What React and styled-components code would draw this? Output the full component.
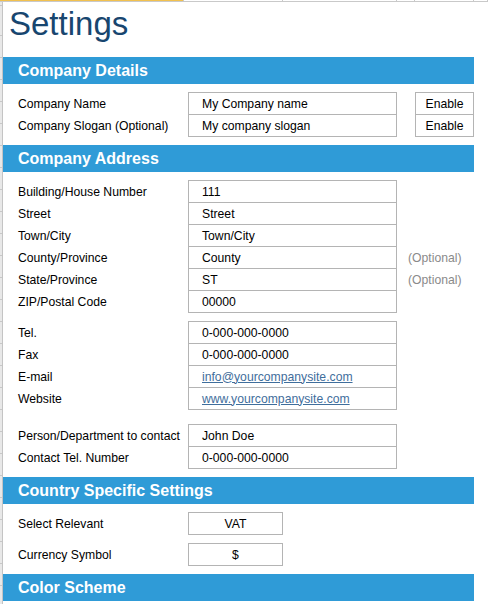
import React from 'react';
import styled, { createGlobalStyle } from 'styled-components';

const GlobalStyle = createGlobalStyle`
  html, body {
    margin: 0;
    padding: 0;
    background: #ffffff;
  }
  body {
    font-family: "Liberation Sans", Arial, sans-serif;
    color: #000000;
  }
`;

const companyDetails = [
  { label: 'Company Name', value: 'My Company name', side: 'Enable' },
  { label: 'Company Slogan (Optional)', value: 'My company slogan', side: 'Enable' }
];

const address = [
  { label: 'Building/House Number', value: '111' },
  { label: 'Street', value: 'Street' },
  { label: 'Town/City', value: 'Town/City' },
  { label: 'County/Province', value: 'County', note: '(Optional)' },
  { label: 'State/Province', value: 'ST', note: '(Optional)' },
  { label: 'ZIP/Postal Code', value: '00000' }
];

const contact = [
  { label: 'Tel.', value: '0-000-000-0000' },
  { label: 'Fax', value: '0-000-000-0000' },
  { label: 'E-mail', value: 'info@yourcompanysite.com', link: true },
  { label: 'Website', value: 'www.yourcompanysite.com', link: true }
];

const person = [
  { label: 'Person/Department to contact', value: 'John Doe' },
  { label: 'Contact Tel. Number', value: '0-000-000-0000' }
];

const country = [
  { label: 'Select Relevant', value: 'VAT' },
  { label: 'Currency Symbol', value: '$' }
];

const FieldGroup = ({ rows, top }) => (
  <Group $top={top}>
    {rows.map((row) => (
      <Row key={row.label}>
        <Label>{row.label}</Label>
        <Value>{row.link ? <LinkText>{row.value}</LinkText> : row.value}</Value>
        {row.side && <SideBox>{row.side}</SideBox>}
        {row.note && <Note>{row.note}</Note>}
      </Row>
    ))}
  </Group>
);

const App = () => {
  return (
    <>
      <GlobalStyle />
      <Page>
        <TopEdge>
          <TopCell $w={184} $selected />
          <TopCell $w={99} />
          <TopCell $w={114} />
          <TopCell $w={18} />
          <TopCell $w={59} />
          <TopCell $w={14} />
        </TopEdge>
        <Body>
          <Gutter />
          <Content>
            <Title>Settings</Title>

            <SectionHeader>Company Details</SectionHeader>
            <FieldGroup rows={companyDetails} top={8} />

            <SectionHeader $top={9}>Company Address</SectionHeader>
            <FieldGroup rows={address} top={8} />
            <FieldGroup rows={contact} top={9} />
            <FieldGroup rows={person} top={15} />

            <SectionHeader $top={9}>Country Specific Settings</SectionHeader>
            <CountryList>
              {country.map((row) => (
                <CountryRow key={row.label}>
                  <Label>{row.label}</Label>
                  <SmallBox>{row.value}</SmallBox>
                </CountryRow>
              ))}
            </CountryList>

            <SectionHeader $top={8}>Color Scheme</SectionHeader>
          </Content>
        </Body>
      </Page>
    </>
  );
};

export default App;

const Page = styled.div`
  width: 488px;
  height: 604px;
  overflow: hidden;
  display: flex;
  flex-direction: column;
`;

const TopEdge = styled.div`
  display: flex;
  height: 2px;
  flex-shrink: 0;
`;

const TopCell = styled.div`
  width: ${(p) => p.$w}px;
  box-sizing: border-box;
  border-right: 1px solid #c9c9c9;
  border-bottom: 1px solid #c9c9c9;
  background: ${(p) => (p.$selected ? '#f2c14e' : 'transparent')};
`;

const Body = styled.div`
  display: flex;
  flex: 1;
`;

const Gutter = styled.div`
  width: 3px;
  flex-shrink: 0;
  box-sizing: border-box;
  border-right: 1px solid #c4c4c4;
  background-color: #e8e8e8;
  background-image: repeating-linear-gradient(
    to bottom,
    transparent 0,
    transparent 21px,
    #c8c8c8 21px,
    #c8c8c8 22px
  );
  background-position: 0 12px;
`;

const Content = styled.div`
  width: 471px;
  display: flex;
  flex-direction: column;
`;

const Title = styled.h1`
  margin: 0;
  height: 55px;
  box-sizing: border-box;
  padding: 5px 0 0 6px;
  font-size: 33px;
  line-height: 33px;
  font-weight: normal;
  color: #18466f;
`;

const SectionHeader = styled.div`
  height: 27px;
  margin-top: ${(p) => p.$top || 0}px;
  padding-left: 15px;
  display: flex;
  align-items: center;
  background: #2f9bd7;
  color: #ffffff;
  font-size: 16px;
  font-weight: bold;
`;

const Group = styled.div`
  display: flex;
  flex-direction: column;
  margin-top: ${(p) => p.$top}px;
  padding-left: 15px;
`;

const Row = styled.div`
  display: grid;
  grid-template-columns: 170px 209px 18px 59px;
  height: 22px;
  font-size: 12.2px;
`;

const Label = styled.div`
  align-self: center;
  white-space: nowrap;
`;

const Value = styled.div`
  height: 23px;
  box-sizing: border-box;
  border: 1px solid #b4b4b4;
  padding-left: 13px;
  display: flex;
  align-items: center;
  white-space: nowrap;
`;

const LinkText = styled.span`
  color: #3f6e9c;
  text-decoration: underline;
`;

const SideBox = styled.div`
  grid-column: 4;
  height: 23px;
  box-sizing: border-box;
  border: 1px solid #b4b4b4;
  display: flex;
  align-items: center;
  justify-content: center;
`;

const Note = styled.div`
  grid-column: 3 / 5;
  align-self: center;
  padding-left: 11px;
  color: #8a8a8a;
`;

const CountryList = styled.div`
  display: flex;
  flex-direction: column;
  gap: 8px;
  margin-top: 8px;
  padding-left: 15px;
`;

const CountryRow = styled.div`
  display: grid;
  grid-template-columns: 170px 95px;
  height: 23px;
  font-size: 12.2px;
`;

const SmallBox = styled.div`
  box-sizing: border-box;
  border: 1px solid #b4b4b4;
  display: flex;
  align-items: center;
  justify-content: center;
`;
